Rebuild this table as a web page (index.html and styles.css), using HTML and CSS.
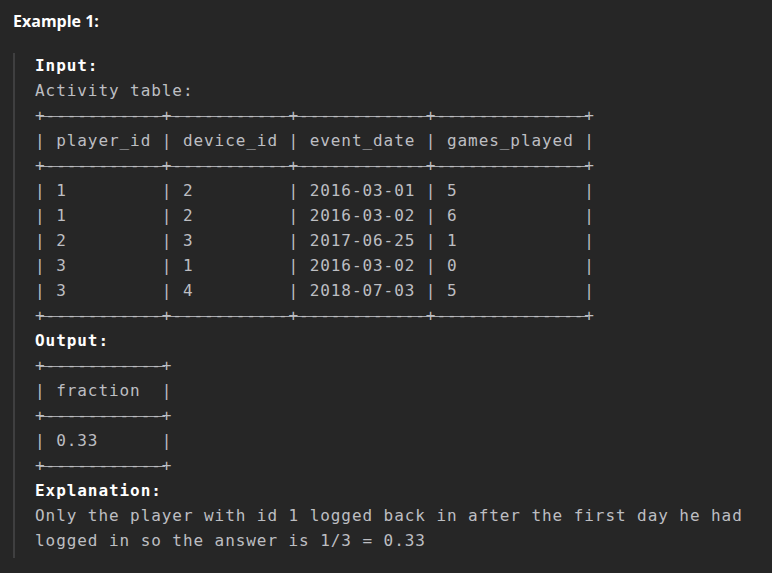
FILE: index.html
```
<!DOCTYPE html>
<html lang="en">
<head>
<meta charset="utf-8">
<title>Example 1</title>
<link rel="stylesheet" href="styles.css">
</head>
<body>
<div class="example">
<p class="example-title">Example 1:</p>
<div class="example-block">
<pre class="example-pre"><strong class="label">Input:</strong>
Activity table:
<span class="rule">+-----------+-----------+------------+--------------+</span>
| player_id | device_id | event_date | games_played |
<span class="rule">+-----------+-----------+------------+--------------+</span>
| 1         | 2         | 2016-03-01 | 5            |
| 1         | 2         | 2016-03-02 | 6            |
| 2         | 3         | 2017-06-25 | 1            |
| 3         | 1         | 2016-03-02 | 0            |
| 3         | 4         | 2018-07-03 | 5            |
<span class="rule">+-----------+-----------+------------+--------------+</span>
<strong class="label">Output:</strong>
<span class="rule">+-----------+</span>
| fraction  |
<span class="rule">+-----------+</span>
| 0.33      |
<span class="rule">+-----------+</span>
<strong class="label">Explanation:</strong>
Only the player with id 1 logged back in after the first day he had
logged in so the answer is 1/3 = 0.33</pre>
</div>
</div>
</body>
</html>
```
FILE: styles.css
```
html, body {
  margin: 0;
  padding: 0;
  background: #262626;
}

body {
  width: 772px;
  height: 573px;
  overflow: hidden;
}

.example {
  padding: 9px 0 0 13px;
}

.example-title {
  margin: 0;
  font-family: "Open Sans", "Noto Sans", sans-serif;
  font-weight: 700;
  font-size: 16px;
  line-height: 24px;
  color: #ffffff;
}

.example-block {
  margin-top: 20px;
  border-left: 2px solid #3f3f40;
  padding: 0 0 5px 20px;
}

.example-pre {
  margin: 0;
  font-family: "DejaVu Sans Mono", "Liberation Mono", monospace;
  font-size: 16px;
  line-height: 25px;
  letter-spacing: 0.93px;
  color: #bdbec2;
  white-space: pre;
}

.rule {
  background-image: linear-gradient(#a8a9ad, #a8a9ad);
  background-size: calc(100% - 12px) 1px;
  background-position: 5px 53%;
  background-repeat: no-repeat;
}

.label {
  font-weight: 700;
  color: #ffffff;
}
```
